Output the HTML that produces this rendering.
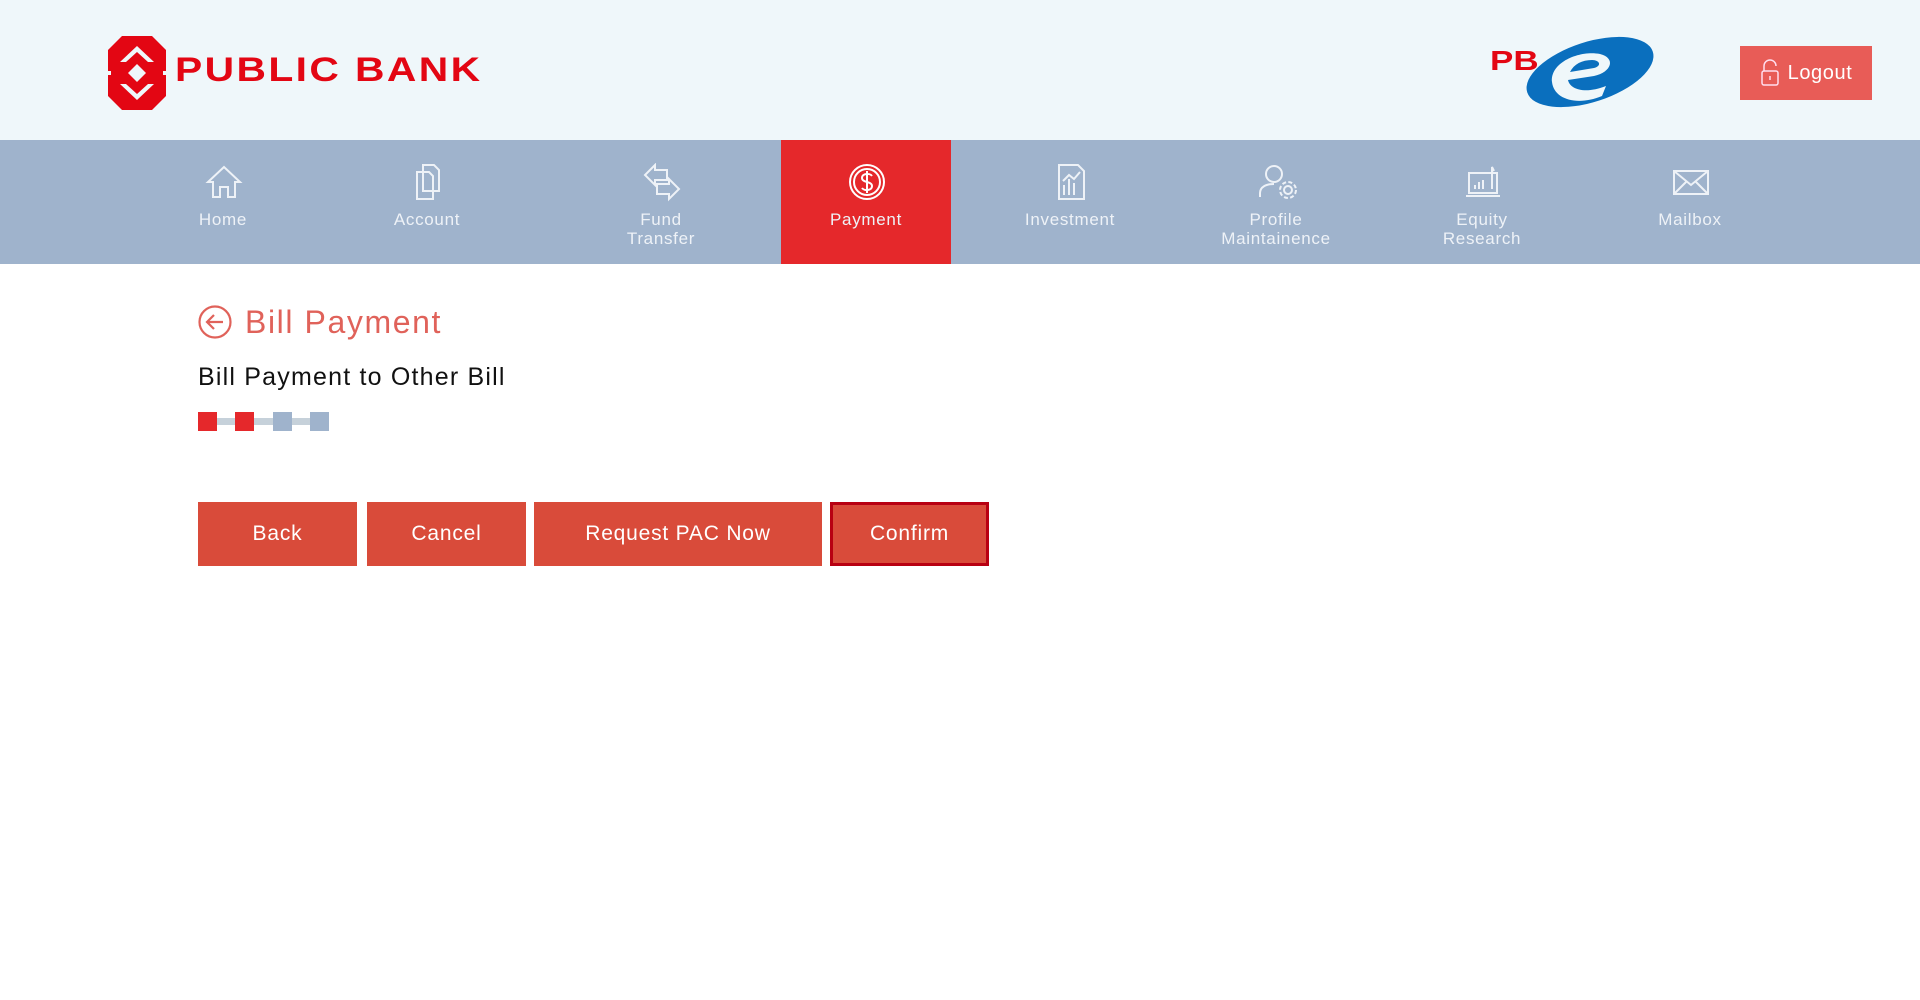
<!DOCTYPE html>
<html><head><meta charset="utf-8"><style>
*{margin:0;padding:0;box-sizing:border-box}
body{width:1920px;height:1000px;background:#fff;font-family:"Liberation Sans",sans-serif;position:relative;overflow:hidden}
.hdr{position:absolute;left:0;top:0;width:1920px;height:140px;background:#eff7fa}
.nav{position:absolute;left:0;top:140px;width:1920px;height:124px;background:#9fb3cc}
.act{position:absolute;left:781px;top:0;width:170px;height:124px;background:#e5282b}
.it{position:absolute;top:0;width:200px;height:124px;text-align:center;color:#eef2f7;font-size:17px;line-height:19px;letter-spacing:0.7px}
.it svg{position:absolute;left:82px;top:23px}
.it span{position:absolute;left:0;right:0;top:70px}
.ab{position:absolute}
.btn{position:absolute;top:502px;height:64px;background:#d94b3a;color:#fff;font-size:21px;letter-spacing:0.8px;display:flex;align-items:center;justify-content:center}
</style></head><body>
<div class="hdr">
 <svg class="ab" style="left:108px;top:36px" width="58" height="74" viewBox="0 0 58 74">
  <path d="M14 0H44L58 14V60L44 74H14L0 60V14Z" fill="#e30613"/>
  <path d="M29 10L46 26H40L29 16L18 26H12Z" fill="#eff7fa"/>
  <path d="M29 64L46 48H40L29 58L18 48H12Z" fill="#eff7fa"/>
  <path d="M29 28L38 37L29 46L20 37Z" fill="#eff7fa"/>
  <rect x="0" y="35" width="3" height="4" fill="#eff7fa"/><rect x="55" y="35" width="3" height="4" fill="#eff7fa"/>
 </svg>
 <div class="ab" style="left:175px;top:50px;font-size:34px;font-weight:bold;color:#e30613;letter-spacing:2px;transform:scaleX(1.2);transform-origin:left;line-height:40px">PUBLIC BANK</div>
 <svg class="ab" style="left:1490px;top:36px" width="168" height="74" viewBox="0 0 168 74">
  <ellipse cx="100" cy="36" rx="66" ry="30" transform="rotate(-18 100 36)" fill="#0a6fbe"/>
  <path d="M62 46C60 26 90 14 110 18C126 22 122 36 104 40L78 44C80 54 96 58 116 50L112 60C88 70 64 64 62 46ZM80 36L104 32C112 30 110 24 102 24C92 24 84 28 80 36Z" fill="#eff7fa"/>
  <text x="0" y="34" font-family="Liberation Sans" font-weight="bold" font-size="28" fill="#e30613" transform="scale(1.25 1)">PB</text>
 </svg>
 <div class="ab" style="left:1740px;top:46px;width:132px;height:54px;background:#e85c57;color:#fff;font-size:20px;letter-spacing:0.6px;display:flex;align-items:center;justify-content:center;gap:8px">
  <svg width="20" height="28" viewBox="0 0 20 28" fill="none" stroke="#fde" stroke-width="1.5"><path d="M4 12V7a6 6 0 0 1 12 0"/><rect x="2" y="12" width="16" height="14" rx="2"/><path d="M10 17v4"/></svg>Logout</div>
</div>
<div class="nav">
 <div class="act"></div>
 <div class="it" style="left:123px"><svg width="38" height="38" viewBox="0 0 38 38" fill="none" stroke="#eef2f7" stroke-width="2"><path d="M3 19L19 4L35 19H30V34H23V24H15V34H8V19Z"/></svg><span>Home</span></div>
 <div class="it" style="left:327px"><svg width="38" height="38" viewBox="0 0 38 38" fill="none" stroke="#eef2f7" stroke-width="2"><path d="M14 2H25L30 7V28H14Z"/><path d="M8 9H20L24 13V36H8Z"/></svg><span>Account</span></div>
 <div class="it" style="left:561px"><svg width="38" height="40" viewBox="0 0 38 40" fill="none" stroke="#eef2f7" stroke-width="2"><path d="M12 2L2 12L12 22V17H24V7H12Z"/><path d="M26 16L36 26L26 36V31H14V21H26Z"/></svg><span>Fund<br>Transfer</span></div>
 <div class="it" style="left:766px"><svg width="38" height="38" viewBox="0 0 38 38" fill="none" stroke="#fff" stroke-width="2"><circle cx="19" cy="19" r="17"/><circle cx="19" cy="19" r="13"/><path d="M24 13C22 10 14 10 14 15C14 20 24 18 24 23C24 28 16 28 14 25M19 8V30"/></svg><span>Payment</span></div>
 <div class="it" style="left:970px"><svg width="38" height="38" viewBox="0 0 38 38" fill="none" stroke="#eef2f7" stroke-width="2"><path d="M7 2H26L32 8V36H7Z"/><path d="M12 32V22M17 32V16M22 32V20M11 18L17 12L22 16L28 9"/></svg><span>Investment</span></div>
 <div class="it" style="left:1176px"><svg width="40" height="38" viewBox="0 0 40 38" fill="none" stroke="#eef2f7" stroke-width="2"><circle cx="16" cy="11" r="8"/><path d="M2 34V30C2 24 8 21 16 21"/><circle cx="30" cy="27" r="4"/><circle cx="30" cy="27" r="8" stroke-dasharray="4 2.3"/></svg><span>Profile<br>Maintainence</span></div>
 <div class="it" style="left:1382px"><svg width="38" height="38" viewBox="0 0 38 38" fill="none" stroke="#eef2f7" stroke-width="2"><rect x="5" y="10" width="28" height="20"/><path d="M2 33H36M11 26V22M15 26V19M19 26V17M28 26V4L30 8"/></svg><span>Equity<br>Research</span></div>
 <div class="it" style="left:1590px"><svg width="38" height="38" viewBox="0 0 38 38" fill="none" stroke="#eef2f7" stroke-width="2"><rect x="2" y="8" width="34" height="23"/><path d="M2 8L19 22L36 8M2 31L14 19M36 31L24 19"/></svg><span>Mailbox</span></div>
</div>
<svg class="ab" style="left:198px;top:305px" width="34" height="34" viewBox="0 0 34 34" fill="none" stroke="#e0625a" stroke-width="2.2"><circle cx="17" cy="17" r="15.5"/><path d="M25 17H10M16 10L9 17L16 24"/></svg>
<div class="ab" style="left:245px;top:302px;font-size:32px;color:#e0625a;line-height:40px;letter-spacing:1.6px">Bill Payment</div>
<div class="ab" style="left:198px;top:362px;font-size:25px;color:#111;line-height:30px;letter-spacing:1.2px">Bill Payment to Other Bill</div>
<div class="ab" style="left:210px;top:418px;width:110px;height:7px;background:#c6d1da"></div>
<div class="ab" style="left:198px;top:412px;width:19px;height:19px;background:#e5282b"></div>
<div class="ab" style="left:235px;top:412px;width:19px;height:19px;background:#e5282b"></div>
<div class="ab" style="left:273px;top:412px;width:19px;height:19px;background:#9fb3cc"></div>
<div class="ab" style="left:310px;top:412px;width:19px;height:19px;background:#9fb3cc"></div>
<div class="btn" style="left:198px;width:159px">Back</div>
<div class="btn" style="left:367px;width:159px">Cancel</div>
<div class="btn" style="left:534px;width:288px">Request PAC Now</div>
<div class="btn" style="left:830px;width:159px;border:3px solid #b80012">Confirm</div>
</body></html>
